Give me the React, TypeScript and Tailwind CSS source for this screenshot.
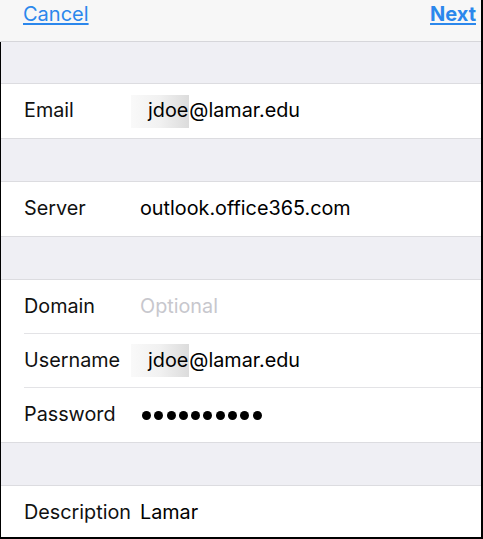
import type { ReactNode } from "react"

const font = { fontFamily: "Inter, 'Liberation Sans', sans-serif" }

function Gap({ first = false }: { first?: boolean }) {
  return (
    <div
      className={`${first ? "h-[42px]" : "h-[43px]"} border-b border-[#dcdce0] bg-[#efeff4]`}
    />
  )
}

function Row({
  label,
  children,
  inset = false,
}: {
  label: string
  children: ReactNode
  inset?: boolean
}) {
  return (
    <div className="bg-white pl-[23px]">
      <div
        className={`flex h-[54px] items-center ${inset ? "border-b border-[#e3e3e6]" : ""}`}
      >
        <span className="w-[116px] shrink-0 text-[19.8px] text-[#111]">{label}</span>
        <div className="flex items-center text-[19.8px] text-black">{children}</div>
      </div>
    </div>
  )
}

function Redacted({ text }: { text: string }) {
  return (
    <span className="flex items-center">
      <span className="-ml-[9px] flex h-[33px] items-center bg-gradient-to-r from-[#f9f9f9] via-[#f1f1f1] to-[#dcdcdc] pl-[17px] pr-[1px]">
        {text}
      </span>
      <span>@lamar.edu</span>
    </span>
  )
}

function Dots({ count }: { count: number }) {
  return (
    <div className="flex gap-[3.3px] pl-[2px]">
      {Array.from({ length: count }).map((_, i) => (
        <span key={i} className="h-[9px] w-[9px] rounded-full bg-black" />
      ))}
    </div>
  )
}

export default function App() {
  return (
    <div
      className="h-[539px] w-[483px] overflow-hidden border-b-2 border-r-2 border-black bg-white"
      style={font}
    >
      <div className="flex h-[42px] items-start justify-between border-b border-[#d6d6da] bg-[#f7f7f7] pl-[23px] pr-[5px] pt-[1px]">
        <a href="#" className="text-[20px] leading-[27px] text-[#2b87ec] underline underline-offset-2">
          Cancel
        </a>
        <a href="#" className="text-[20px] font-bold leading-[27px] text-[#2b87ec] underline underline-offset-2">
          Next
        </a>
      </div>

      <div className="border-l border-black">
        <Gap first />
        <div className="border-b border-[#dcdce0]">
          <Row label="Email">
            <Redacted text="jdoe" />
          </Row>
        </div>
        <Gap />
        <div className="border-b border-[#dcdce0]">
          <Row label="Server">outlook.office365.com</Row>
        </div>
        <Gap />
        <div className="border-b border-[#dcdce0]">
          <Row label="Domain" inset>
            <span className="text-[#c7c7cd]">Optional</span>
          </Row>
          <Row label="Username" inset>
            <Redacted text="jdoe" />
          </Row>
          <Row label="Password">
            <Dots count={10} />
          </Row>
        </div>
        <Gap />
        <Row label="Description">Lamar</Row>
      </div>
    </div>
  )
}
